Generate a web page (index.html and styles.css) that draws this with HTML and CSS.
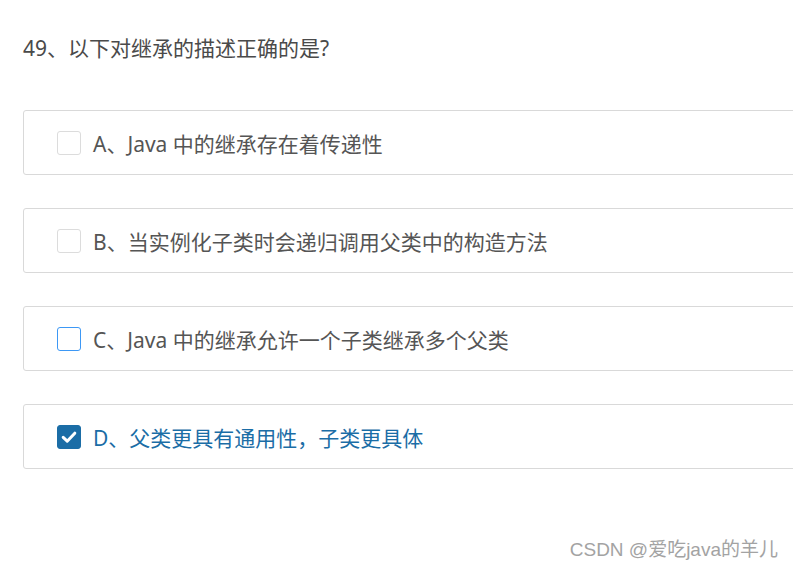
FILE: index.html
```html
<!DOCTYPE html>
<html lang="zh">
<head>
<meta charset="utf-8">
<link rel="stylesheet" href="styles.css">
</head>
<body>
<div class="page">
  <div class="question">49、以下对继承的描述正确的是?</div>
  <div class="options">
    <label class="option">
      <span class="box"></span>
      <span class="text">A、Java 中的继承存在着传递性</span>
    </label>
    <label class="option">
      <span class="box"></span>
      <span class="text">B、当实例化子类时会递归调用父类中的构造方法</span>
    </label>
    <label class="option">
      <span class="box hover"></span>
      <span class="text">C、Java 中的继承允许一个子类继承多个父类</span>
    </label>
    <label class="option checked">
      <span class="box on"><svg viewBox="0 0 24 24" width="24" height="24"><path d="M6.2 12.4 L10.2 16.2 L17.8 8.2" fill="none" stroke="#fff" stroke-width="3" stroke-linecap="round" stroke-linejoin="round"/></svg></span>
      <span class="text">D、父类更具有通用性，子类更具体</span>
    </label>
  </div>
  <div class="watermark">CSDN @爱吃java的羊儿</div>
</div>
</body>
</html>
```
FILE: styles.css
```css
html, body {
  margin: 0;
  padding: 0;
  background: #fff;
  overflow: hidden;
}
.page {
  position: relative;
  width: 793px;
  height: 571px;
  overflow: hidden;
  font-family: "Noto Sans", "Noto Sans CJK SC", sans-serif;
}
.question {
  padding: 34px 0 0 23px;
  font-size: 21px;
  line-height: 28px;
  color: #4a4a4a;
}
.options {
  display: flex;
  flex-direction: column;
  gap: 33px;
  margin-top: 48px;
  margin-left: 23px;
}
.option {
  display: flex;
  align-items: center;
  width: 820px;
  height: 63px;
  border: 1px solid #d9d9d9;
  border-radius: 3px;
  padding-left: 33px;
  box-sizing: content-box;
  color: #555;
  font-size: 21px;
}
.box {
  width: 22px;
  height: 22px;
  border: 1px solid #dcdcdc;
  border-radius: 3px;
  flex: none;
  margin-right: 12px;
  margin-top: 1px;
  display: flex;
  align-items: center;
  justify-content: center;
}
.box.hover {
  border-color: #3d98f5;
}
.box.on {
  background: #1b6da6;
  border-color: #1b6da6;
}
.box.on svg {
  flex: none;
}
.text {
  line-height: 28px;
  padding-top: 2px;
}
.option.checked {
  color: #1b6da6;
}
.watermark {
  position: absolute;
  right: 15px;
  bottom: 10px;
  font-family: "Liberation Sans", "Noto Sans CJK SC", sans-serif;
  font-size: 19px;
  color: #a3a3a3;
}
```
